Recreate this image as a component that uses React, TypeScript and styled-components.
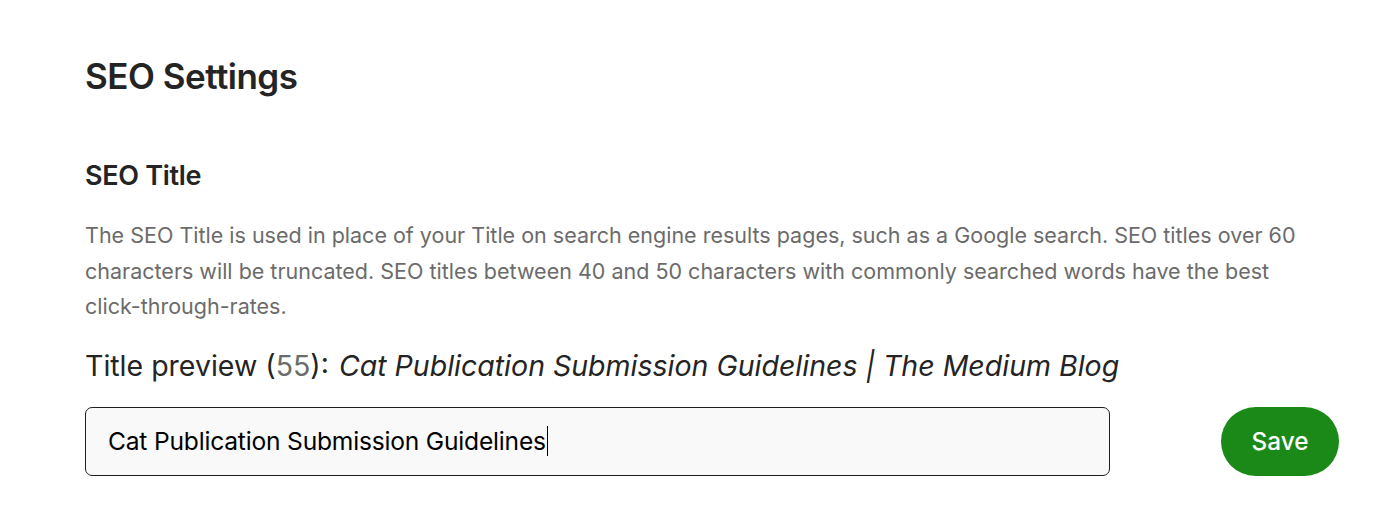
import React from 'react';
import styled, { createGlobalStyle } from 'styled-components';

const GlobalStyle = createGlobalStyle`
  html, body {
    margin: 0;
    padding: 0;
    background: #ffffff;
  }
  body {
    font-family: Inter, "Noto Sans", "Liberation Sans", sans-serif;
    color: #242424;
  }
`;

const Page = styled.div`
  width: 1400px;
  height: 522px;
  box-sizing: border-box;
  padding: 52px 60px 0 85px;
  overflow: hidden;
`;

const Heading = styled.h1`
  margin: 0;
  font-size: 35px;
  line-height: 48px;
  font-weight: 600;
  letter-spacing: -0.5px;
  color: #242424;
`;

const SectionTitle = styled.h2`
  margin: 59px 0 0;
  font-size: 27px;
  line-height: 34px;
  font-weight: 600;
  letter-spacing: -0.3px;
  color: #242424;
`;

const Description = styled.p`
  margin: 25px 0 0;
  font-size: 21.5px;
  line-height: 35.5px;
  color: #6b6b6b;
  max-width: 1255px;
`;

const NoWrap = styled.span`
  white-space: nowrap;
`;

const PreviewRow = styled.div`
  display: flex;
  align-items: baseline;
  margin-top: 21px;
  font-size: 28.5px;
  line-height: 40px;
  color: #242424;
`;

const Count = styled.span`
  color: #6b6b6b;
`;

const PreviewText = styled.span`
  font-style: italic;
  margin-left: 10px;
`;

const FormRow = styled.div`
  display: flex;
  align-items: center;
  margin-top: 21px;
`;

const TextInput = styled.div`
  width: 1025px;
  height: 69px;
  box-sizing: border-box;
  border: 1.5px solid #1f1f1f;
  border-radius: 7px;
  background: #f9f9f9;
  display: flex;
  align-items: center;
  padding: 0 22px;
  font-size: 24.6px;
  letter-spacing: -0.2px;
  color: #000;
`;

const Caret = styled.span`
  display: inline-block;
  width: 1.5px;
  height: 30px;
  background: #000;
  margin-left: 1px;
`;

const SaveButton = styled.button`
  margin-left: 111px;
  width: 118px;
  height: 69px;
  border: none;
  border-radius: 35px;
  background: #1a8917;
  color: #fff;
  font-family: Inter, "Liberation Sans", sans-serif;
  font-size: 24.3px;
  font-weight: 500;
  cursor: pointer;
`;

export default function App() {
  return (
    <>
      <GlobalStyle />
      <Page>
        <Heading>SEO Settings</Heading>
        <SectionTitle>SEO Title</SectionTitle>
        <Description>
          The SEO Title is used in place of your Title on search engine results pages, such as a Google search. SEO titles over 60 characters will be truncated. SEO titles between 40 and 50 characters with commonly searched words have the best <NoWrap>click-through-rates.</NoWrap>
        </Description>
        <PreviewRow>
          <span>
            Title preview (<Count>55</Count>):
          </span>
          <PreviewText>Cat Publication Submission Guidelines | The Medium Blog</PreviewText>
        </PreviewRow>
        <FormRow>
          <TextInput>
            Cat Publication Submission Guidelines
            <Caret />
          </TextInput>
          <SaveButton>Save</SaveButton>
        </FormRow>
      </Page>
    </>
  );
}
